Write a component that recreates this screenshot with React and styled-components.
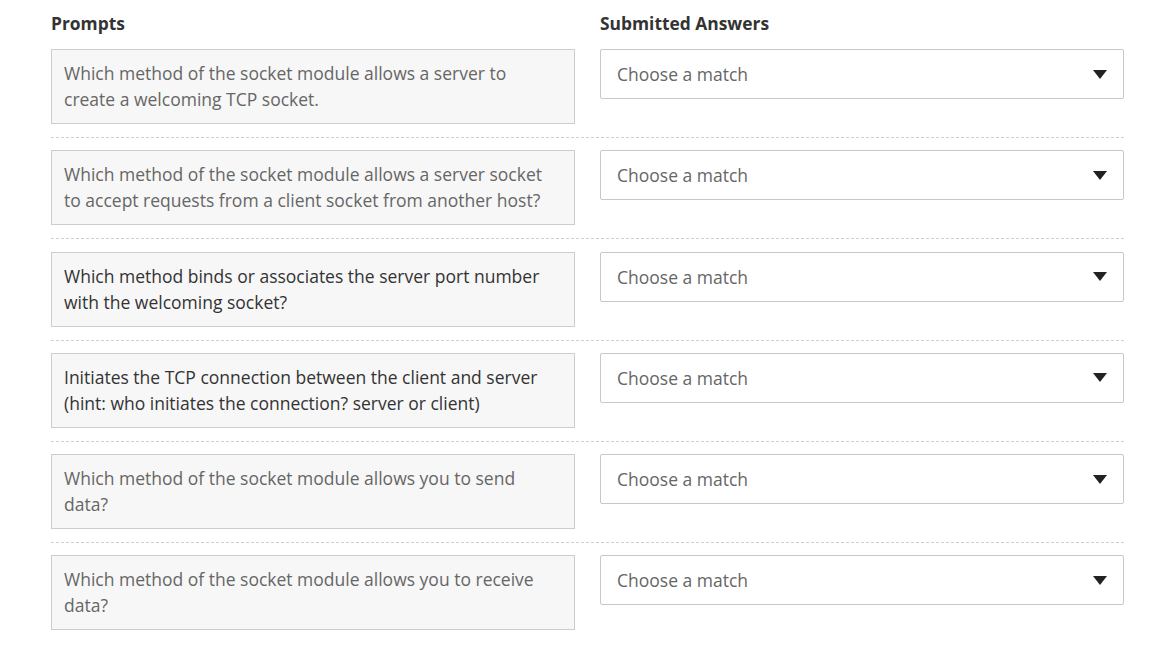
import React from 'react'
import styled, { createGlobalStyle } from 'styled-components'

const GlobalStyle = createGlobalStyle`
  body {
    margin: 0;
    background: #fff;
    font-family: "Open Sans", "Noto Sans", sans-serif;
  }
`

const Page = styled.div`
  padding: 10px 37px 0 51px;
  width: 1073px;
`

const Header = styled.div`
  display: grid;
  grid-template-columns: 524px 524px;
  column-gap: 25px;
  margin-bottom: 13px;
`

const HeaderCell = styled.h2`
  margin: 0;
  font-size: 17.4px;
  font-weight: 700;
  line-height: 26px;
  color: #333;
`

const Row = styled.div`
  display: grid;
  grid-template-columns: 524px 524px;
  column-gap: 25px;
  align-items: start;
  padding: 0 0 13px;
  margin-bottom: 12.25px;
  border-bottom: 1px dashed #d0d0d0;

  &:last-child {
    border-bottom: none;
  }
`

const Prompt = styled.div`
  box-sizing: border-box;
  min-height: 75px;
  padding: 10px 18px 11px 12px;
  background: #f7f7f7;
  border: 1px solid #cdcdcd;
  font-size: 17.5px;
  line-height: 26px;
  color: ${p => (p.$dark ? '#333' : '#666')};
`

const Select = styled.div`
  box-sizing: border-box;
  height: 50px;
  display: flex;
  align-items: center;
  justify-content: space-between;
  padding: 0 16px;
  background: #fff;
  border: 1px solid #c8c8c8;
  border-radius: 2px;
  font-size: 17.5px;
  color: #666;
`

const Arrow = () => (
  <svg width="14" height="9" viewBox="0 0 14 9">
    <path d="M0 0 H14 L7 9 Z" fill="#222" />
  </svg>
)

const rows = [
  { text: 'Which method of the socket module allows a server to create a welcoming TCP socket.' },
  { text: 'Which method of the socket module allows a server socket to accept requests from a client socket from another host?' },
  { text: 'Which method binds or associates the server port number with the welcoming socket?', dark: true },
  { text: 'Initiates the TCP connection between the client and server (hint: who initiates the connection? server or client)', dark: true },
  { text: 'Which method of the socket module allows you to send data?' },
  { text: 'Which method of the socket module allows you to receive data?' },
]

export default function App() {
  return (
    <>
      <GlobalStyle />
      <Page>
        <Header>
          <HeaderCell>Prompts</HeaderCell>
          <HeaderCell>Submitted Answers</HeaderCell>
        </Header>
        {rows.map((r, i) => (
          <Row key={i}>
            <Prompt $dark={r.dark}>{r.text}</Prompt>
            <Select>
              <span>Choose a match</span>
              <Arrow />
            </Select>
          </Row>
        ))}
      </Page>
    </>
  )
}
